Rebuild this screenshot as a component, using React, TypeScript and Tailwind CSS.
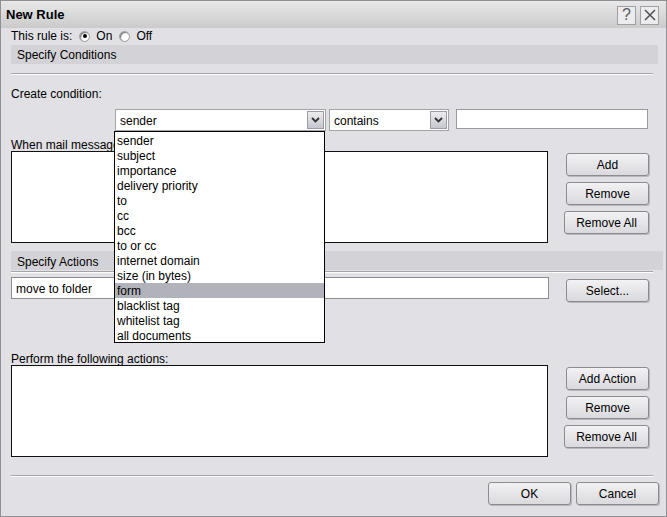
import React from "react";

const items = [
  "sender",
  "subject",
  "importance",
  "delivery priority",
  "to",
  "cc",
  "bcc",
  "to or cc",
  "internet domain",
  "size (in bytes)",
  "form",
  "blacklist tag",
  "whitelist tag",
  "all documents",
];

function Btn({ label, w = "w-[83px]" }: { label: string; w?: string }) {
  return (
    <div
      className={`${w} h-[23px] shrink-0 flex items-center justify-center rounded-[3px] border border-[#8c8c90] bg-gradient-to-b from-[#f2f2f4] to-[#dadade] text-[12px] text-black shadow-[1px_1px_0_#b8b8bc]`}
    >
      {label}
    </div>
  );
}

function Chevron() {
  return (
    <svg width="9" height="6" viewBox="0 0 9 6">
      <path d="M1 1 L4.5 4.5 L8 1" fill="none" stroke="#333" strokeWidth="1.8" />
    </svg>
  );
}

function Select({ value, w }: { value: string; w: string }) {
  return (
    <div className={`${w} h-[22px] shrink-0 flex items-center justify-between border border-[#a4a4a8] bg-white pl-[4px] pr-[1px]`}>
      <span className="text-[12px] leading-[14px] pt-[2px]">{value}</span>
      <div className="w-[17px] h-[18px] flex items-center justify-center border border-[#9c9ca4] bg-gradient-to-b from-[#ececf0] to-[#c6c6ce]">
        <Chevron />
      </div>
    </div>
  );
}

function Radio({ checked }: { checked: boolean }) {
  return (
    <div className="w-[11px] h-[11px] rounded-full bg-white border border-[#9a9a9a] shadow-[inset_1px_1px_1px_#707070] flex items-center justify-center">
      {checked && <div className="w-[4px] h-[4px] rounded-full bg-black" />}
    </div>
  );
}

export default function App() {
  return (
    <div className="relative w-[667px] h-[517px] border border-[#909094] bg-[#e1e1e5] font-['Liberation_Sans',Arial,sans-serif] text-black text-[12px] overflow-hidden">
      {/* Title bar */}
      <div className="h-[27px] flex items-center justify-between bg-gradient-to-b from-[#e8e8e8] to-[#cbcbcb] pl-[5px] pr-[7px]">
        <span className="text-[13px] font-bold">New Rule</span>
        <div className="flex gap-[4px] mt-[1px]">
          <div className="w-[19px] h-[19px] flex items-center justify-center border border-[#a0a0a4] bg-[#ececee] text-[16px] leading-none text-[#5a5a5a]">
            ?
          </div>
          <div className="w-[19px] h-[19px] flex items-center justify-center border border-[#a0a0a4] bg-[#ececee]">
            <svg width="12" height="12" viewBox="0 0 12 12">
              <path d="M1 1 L11 11 M11 1 L1 11" stroke="#505050" strokeWidth="1.5" />
            </svg>
          </div>
        </div>
      </div>

      {/* Body */}
      <div className="pl-[10px] flex flex-col">
        <div className="h-[16px] flex items-center gap-[7px]">
          <span>This rule is:</span>
          <div className="flex items-center gap-[6px]">
            <Radio checked />
            <span>On</span>
          </div>
          <div className="flex items-center gap-[6px]">
            <Radio checked={false} />
            <span>Off</span>
          </div>
        </div>

        <div className="mt-[1px] h-[19px] w-[647px] bg-[#d3d3d7] flex items-center pl-[6px] pt-[1px]">Specify Conditions</div>

        <div className="mt-[9px] w-[642px] h-[2px] border-t border-[#a4a4a8] border-b border-b-white" />

        <div className="mt-[12px] h-[15px] leading-[15px]">Create condition:</div>

        <div className="mt-[7px] flex items-start ml-[104px]">
          <Select value="sender" w="w-[211px]" />
          <div className="ml-[3px]">
            <Select value="contains" w="w-[120px]" />
          </div>
          <div className="ml-[7px] w-[192px] h-[20px] border border-[#9a9a9e] bg-white" />
        </div>

        <div className="mt-[7px] h-[13px] leading-[15px]">When mail messages match these conditions:</div>

        <div className="flex">
          <div className="w-[537px] h-[92px] border border-[#101010] bg-white" />
          <div className="ml-[16px] w-[85px] flex flex-col items-end gap-[6px] pt-[2px]">
            <Btn label="Add" />
            <Btn label="Remove" />
            <Btn label="Remove All" w="w-[85px]" />
          </div>
        </div>

        <div className="mt-[8px] h-[19px] w-[652px] bg-[#d3d3d7] flex items-center pl-[6px] pt-[2px]">Specify Actions</div>
        <div className="mt-[1px] w-[642px] h-[2px] border-t border-[#a4a4a8] border-b border-b-white" />

        <div className="mt-[4px] flex items-start">
          <div className="w-[538px] h-[22px] border border-[#8c8c90] bg-white flex items-center pl-[4px] pt-[1px]">move to folder</div>
          <div className="ml-[17px] mt-[2px]">
            <Btn label="Select..." />
          </div>
        </div>

        <div className="mt-[50px] h-[13px] leading-[15px]">Perform the following actions:</div>

        <div className="flex">
          <div className="w-[537px] h-[92px] border border-[#101010] bg-white" />
          <div className="ml-[16px] w-[85px] flex flex-col items-end gap-[6px] pt-[2px]">
            <Btn label="Add Action" />
            <Btn label="Remove" />
            <Btn label="Remove All" w="w-[85px]" />
          </div>
        </div>

        <div className="mt-[18px] w-[642px] h-[2px] border-t border-[#a4a4a8] border-b border-b-white" />

        <div className="mt-[5px] flex justify-end gap-[5px] pr-[7px]">
          <Btn label="OK" />
          <Btn label="Cancel" />
        </div>
      </div>

      {/* Open dropdown list */}
      <div className="absolute left-[113px] top-[130px] w-[211px] h-[212px] border border-black bg-white pt-[1px]">
        {items.map((it) => (
          <div
            key={it}
            className={`h-[15px] leading-[17px] pl-[2px] text-[12px] ${it === "form" ? "bg-[#b2b2ba]" : ""}`}
          >
            {it}
          </div>
        ))}
      </div>
    </div>
  );
}
